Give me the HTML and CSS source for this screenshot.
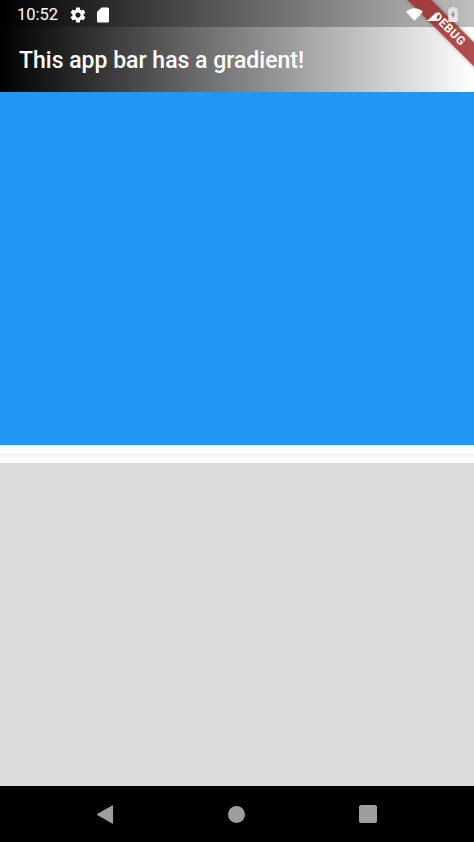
FILE: index.html
```html
<!DOCTYPE html>
<html lang="en">
<head>
    <meta charset="UTF-8">
    <meta name="viewport" content="width=device-width, initial-scale=1.0">
    <title>Gradient App Bar</title>
    <link rel="stylesheet" href="styles.css">
</head>
<body>

    <div class="screen">
        <header class="app-bar">
            <div class="status-bar">
                <span class="clock">10:52</span>
                <svg class="status-icon" width="18" height="18" viewBox="0 0 24 24">
                    <path fill="#fff" d="M19.43 12.98c.04-.32.07-.64.07-.98s-.03-.66-.07-.98l2.11-1.65c.19-.15.24-.42.12-.64l-2-3.46c-.12-.22-.39-.3-.61-.22l-2.49 1c-.52-.4-1.08-.73-1.69-.98l-.38-2.65C14.46 2.18 14.25 2 14 2h-4c-.25 0-.46.18-.49.42l-.38 2.65c-.61.25-1.17.59-1.69.98l-2.49-1c-.23-.09-.49 0-.61.22l-2 3.46c-.13.22-.07.49.12.64l2.11 1.65c-.04.32-.07.65-.07.98s.03.66.07.98l-2.11 1.65c-.19.15-.24.42-.12.64l2 3.46c.12.22.39.3.61.22l2.49-1c.52.4 1.08.73 1.69.98l.38 2.65c.03.24.24.42.49.42h4c.25 0 .46-.18.49-.42l.38-2.65c.61-.25 1.17-.59 1.69-.98l2.49 1c.23.09.49 0 .61-.22l2-3.46c.12-.22.07-.49-.12-.64l-2.11-1.65zM12 15.5c-1.93 0-3.5-1.57-3.5-3.5s1.57-3.5 3.5-3.5 3.5 1.57 3.5 3.5-1.57 3.5-3.5 3.5z"/>
                </svg>
                <svg class="status-icon" width="18" height="18" viewBox="0 0 24 24">
                    <path fill="#fff" d="M18 2h-8L4 8v12c0 1.1.9 2 2 2h12c1.1 0 2-.9 2-2V4c0-1.1-.9-2-2-2z"/>
                </svg>
                <span class="status-spacer"></span>
                <svg class="wifi-icon" width="17" height="13" viewBox="0 0 18 14">
                    <path fill="#fff" d="M0 4.2C2.4 1.7 5.5.3 9 .3s6.600 1.400 9 3.900L9 13.800z"/>
                </svg>
                <svg class="signal-icon" width="10" height="9" viewBox="0 0 10 9">
                    <path fill="#fff" d="M0 9 9.500 0 10 9z"/>
                </svg>
                <svg class="battery-icon" width="10" height="15" viewBox="0 0 10 16">
                    <path fill="#e4e4e4" d="M3 0h4v1.500h2c.5 0 1 .4 1 1V15c0 .6-.5 1-1 1H1c-.5 0-1-.4-1-1V2.500c0-.6.5-1 1-1h2z"/>
                    <path fill="#8c8c8c" d="M5.500 3.500 2.800 9h1.800v3.500L7.300 7H5.500z"/>
                </svg>
            </div>
            <h1 class="app-title">This app bar has a gradient!</h1>
        </header>

        <main class="content">
            <div class="panel-blue"></div>
            <div class="gap-row"></div>
            <div class="gap-row gap-row-last"></div>
            <div class="panel-grey"></div>
        </main>

        <nav class="nav-bar">
            <svg width="18" height="19" viewBox="0 0 18 20">
                <path fill="#9e9e9e" d="M17.500 1v18c0 .6-.5.8-1 .5L.8 10.500c-.4-.3-.4-.7 0-1L16.500.5c.5-.3 1-.1 1 .5z"/>
            </svg>
            <span class="nav-circle"></span>
            <span class="nav-square"></span>
        </nav>

        <div class="debug-banner">DEBUG</div>
    </div>

</body>
</html>
```

FILE: styles.css
```css
* {
    box-sizing: border-box;
}

html,
body {
    margin: 0;
    padding: 0;
}

/* Whole phone screen */
.screen {
    width: 474px;
    height: 842px;
    display: flex;
    flex-direction: column;
    position: relative;
    overflow: hidden;
    background-color: #fafafa;
    font-family: Roboto, "Liberation Sans", sans-serif;
}

/* App bar with the gradient, status bar sits on top of it */
.app-bar {
    height: 92px;
    flex: none;
    background: linear-gradient(to right, #000, #fff);
}

.status-bar {
    height: 27px;
    display: flex;
    align-items: center;
    padding: 2px 16px 0 17px;
    background-color: rgba(0, 0, 0, 0.25);
    color: #fff;
}

.clock {
    font-size: 16.5px;
    margin-right: 11px;
}

.status-icon {
    margin-right: 7px;
}

.status-spacer {
    flex: 1;
}

/* These three are drawn over the ribbon */
.wifi-icon,
.signal-icon,
.battery-icon {
    position: relative;
    z-index: 2;
}

.wifi-icon {
    margin-right: 4px;
}

.signal-icon {
    margin: 4px 11px 0 0;
}

.app-title {
    margin: 0;
    padding: 19px 0 0 19px;
    color: #fff;
    font-size: 23px;
    font-weight: 500;
    line-height: 30px;
}

/* Body of the page */
.content {
    flex: 1;
    display: flex;
    flex-direction: column;
}

.panel-blue {
    height: 353px;
    background-color: #2196f3;
}

.gap-row {
    height: 9px;
    background-color: #fdfdfd;
}

.gap-row-last {
    border-top: 1px solid #ececec;
    background-color: #fbfbfb;
}

.panel-grey {
    flex: 1;
    background-color: #dcdcdc;
}

/* Android navigation buttons */
.nav-bar {
    height: 56px;
    flex: none;
    display: flex;
    align-items: center;
    background-color: #000;
    padding: 0 97px 0 96px;
    justify-content: space-between;
}

.nav-circle {
    width: 17px;
    height: 17px;
    border-radius: 50%;
    background-color: #9e9e9e;
}

.nav-square {
    width: 18px;
    height: 18px;
    border-radius: 2px;
    background-color: #9e9e9e;
}

/* Ribbon in the corner */
.debug-banner {
    position: absolute;
    top: 21px;
    left: 389px;
    width: 120px;
    height: 17px;
    z-index: 1;
    transform: rotate(45deg);
    background-color: rgba(160, 36, 36, 0.82);
    box-shadow: 0 0 4px rgba(0, 0, 0, 0.35);
    color: #fff;
    font-size: 12px;
    font-weight: 700;
    letter-spacing: 0.5px;
    line-height: 17px;
    text-align: center;
}
```
